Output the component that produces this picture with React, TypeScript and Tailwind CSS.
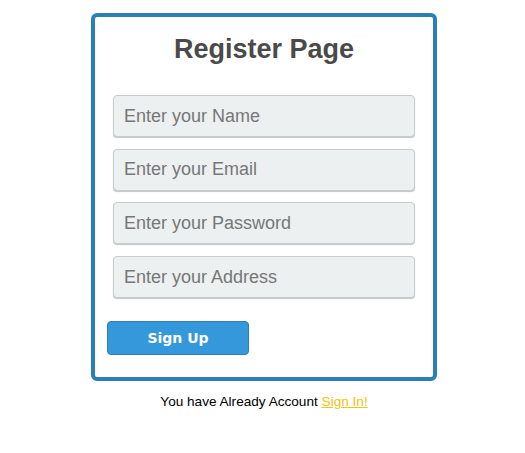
export default function App() {
  const fields = ['Enter your Name', 'Enter your Email', 'Enter your Password', 'Enter your Address'];

  return (
    <div className="min-h-[453px] bg-white pt-[13px] pl-[3px] font-['Liberation_Sans',Arial,sans-serif]">
      <div className="mx-auto w-[346px] rounded-[6px] border-4 border-[#2a7fba] bg-white pt-[17px] pb-[22px]">
        <h1 className="text-center text-[27px] font-bold leading-[31px] text-[#4a4a4a]">Register Page</h1>

        <form className="mt-[30px] flex flex-col" onSubmit={e => e.preventDefault()}>
          <div className="flex flex-col gap-[11.7px] px-[18px]">
            {fields.map(f => (
              <input
                key={f}
                type="text"
                placeholder={f}
                className="h-[42px] w-full rounded-[4px] border border-[#c8cccd] bg-[#ecf0f1] px-[10px] text-[18px] text-[#333] shadow-[0_1px_1px_#c2c6c7] outline-none placeholder:text-[#777]"
              />
            ))}
          </div>

          <div className="mt-[23px] pl-[12px]">
            <button
              type="submit"
              className="h-[34px] w-[142px] rounded-[4px] border border-[#2a80b9] bg-[#3498db] font-['DejaVu_Sans',sans-serif] text-[14px] font-bold text-white"
            >
              Sign Up
            </button>
          </div>
        </form>
      </div>

      <p className="mt-[13px] text-center text-[13.6px] leading-[16px] text-black">
        You have Already Account{' '}
        <a href="#" className="text-[#f1c40f] underline">
          Sign In!
        </a>
      </p>
    </div>
  );
}
